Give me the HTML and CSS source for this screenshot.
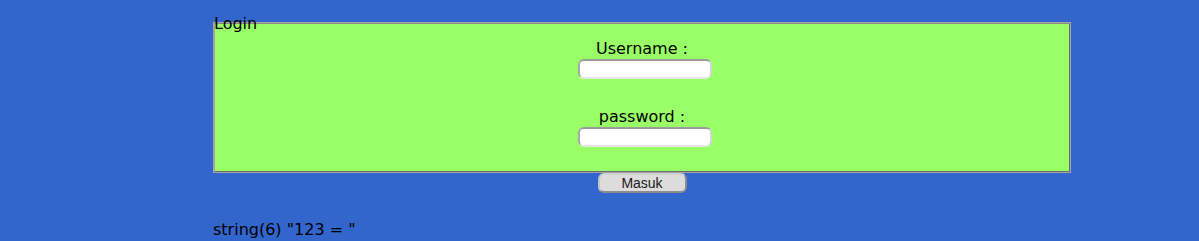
FILE: index.html
```html
<!DOCTYPE html>
<html>
<head>
<meta charset="utf-8">
<title>Login</title>
<link rel="stylesheet" href="styles.css">
</head>
<body>
<div class="page">
  <div class="title">Login</div>
  <form class="login-form">
    <div class="panel">
      <div class="panel-inner">
        <label class="field-label" for="username">Username :</label>
        <input class="field" type="text" id="username" name="username">
        <label class="field-label second" for="password">password :</label>
        <input class="field" type="password" id="password" name="password">
      </div>
    </div>
    <button class="submit" type="submit">Masuk</button>
  </form>
  <div class="output">string(6) "123 = "</div>
</div>
</body>
</html>
```
FILE: styles.css
```css
html, body {
  margin: 0;
  padding: 0;
}
body {
  background: #3366cc;
  font-family: "DejaVu Sans", sans-serif;
  font-size: 16px;
  color: #000;
  height: 241px;
  overflow: hidden;
}
.page {
  width: 858px;
  margin-left: 213px;
  padding-top: 8px;
}
.title {
  height: 14px;
  line-height: 32px;
  white-space: nowrap;
  padding-left: 1px;
}
.login-form {
  margin: 0;
}
.panel {
  border: 1px solid #a4a4a4;
}
.panel-inner {
  background: #99ff66;
  border: 1px solid;
  border-color: #8a8a8a #6c6c6c #6c6c6c #a4a4a4;
  padding: 14px 0 24px;
  display: flex;
  flex-direction: column;
  align-items: center;
}
.field-label {
  line-height: 21px;
}
.field-label.second {
  margin-top: 27px;
}
.field {
  display: block;
  width: 134px;
  height: 20px;
  box-sizing: border-box;
  margin: 0 0 0 6px;
  padding: 0 4px;
  border: 2px solid;
  border-color: #9c9c9c #d4d4d4 #e6e6e6 #a8a8a8;
  border-radius: 6px;
  background: #fff;
  font: 13px "Liberation Sans", sans-serif;
}
.submit {
  display: block;
  width: 89px;
  height: 20px;
  box-sizing: border-box;
  margin: 0 auto;
  padding: 0;
  border: 2px solid;
  border-color: #cfcfcf #8c8c8c #8c8c8c #c4c4c4;
  border-radius: 6px;
  background: #dcdcdc;
  font-family: "Liberation Sans", sans-serif;
  font-size: 14px;
  line-height: 16px;
  color: #1a1a1a;
}
.output {
  margin-top: 27px;
  white-space: nowrap;
}
```
